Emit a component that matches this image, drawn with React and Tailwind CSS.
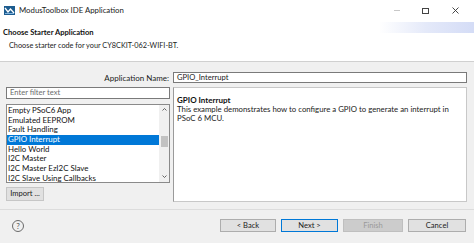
import React from "react";

const items = [
  "Empty PSoC6 App",
  "Emulated EEPROM",
  "Fault Handling",
  "GPIO Interrupt",
  "Hello World",
  "I2C Master",
  "I2C Master EzI2C Slave",
  "I2C Slave Using Callbacks",
];

export default function App() {
  return (
    <div
      className="w-[474px] h-[243px] bg-[#f0f0f0] flex flex-col overflow-hidden text-[#000] whitespace-nowrap"
      style={{ fontFamily: 'Lato, "Noto Sans", sans-serif' }}
    >
      {/* Title bar */}
      <div className="h-[20px] bg-white flex items-center relative shrink-0 pt-[1px]">
        <svg className="ml-[4px] w-[11px] h-[9px]" viewBox="0 0 11 9">
          <rect width="11" height="9" fill="#1d5c8f" />
          <path d="M1 2 L4 6 L6.5 3 L10 7" stroke="#ffffff" strokeWidth="1.3" fill="none" />
          <path d="M1 7.5 L10 7.5" stroke="#7fb3de" strokeWidth="1" />
        </svg>
        <span className="ml-[4px] text-[7.8px] leading-none text-[#222]">ModusToolbox IDE Application</span>
        <div className="ml-auto flex items-center h-full">
          <div className="w-[29px] flex justify-center">
            <div className="w-[6px] h-px bg-[#c8c8c8]" />
          </div>
          <div className="w-[29px] flex justify-center">
            <div className="w-[7px] h-[6px] border border-[#444]" />
          </div>
          <div className="w-[30px] flex justify-center mr-[4px]">
            <svg width="7" height="7" viewBox="0 0 7 7">
              <path d="M0.5 0.5 L6.5 6.5 M6.5 0.5 L0.5 6.5" stroke="#333" strokeWidth="0.9" />
            </svg>
          </div>
        </div>
      </div>

      {/* Header */}
      <div className="h-[42px] bg-white relative shrink-0 border-b border-[#d0d0d0]">
        <div
          className="absolute right-0 top-[2px] h-[11px] w-[95px]"
          style={{
            background:
              "linear-gradient(90deg, rgba(255,255,255,1) 0%, rgba(228,233,249,1) 50%, rgba(212,220,246,1) 100%)",
          }}
        />
        <div className="absolute left-[3px] top-[9px] text-[7.6px] font-bold leading-none text-[#111]">
          Choose Starter Application
        </div>
        <div className="absolute left-[9px] top-[22px] text-[7.3px] leading-none text-[#222]">
          Choose starter code for your CY8CKIT-062-WIFI-BT.
        </div>
      </div>

      {/* Body */}
      <div className="flex-1 flex flex-col pt-[10px] pl-[6px] pr-[7px] pb-[7px] border-b border-[#dcdcdc]">
        <div className="flex items-center h-[11px]">
          <div className="w-[164px] text-right text-[8px] leading-none pr-[1px] text-[#222]">Application Name:</div>
          <div className="ml-[3px] flex-1 h-[11px] bg-white border border-[#7a7a7a] flex items-center pl-[3px] text-[7.6px] leading-none text-[#222]">
            GPIO_Interrupt
          </div>
        </div>
        <div className="flex mt-[4px] flex-1">
          <div className="w-[164px] flex flex-col">
            <div className="h-[12px] bg-white border border-[#7a7a7a] flex items-center pl-[3px] text-[7.6px] leading-none text-[#6d6d6d]">
              Enter filter text
            </div>
            <div className="mt-[5px] h-[79px] bg-white border border-[#8a8a8a] flex overflow-hidden">
              <div className="flex-1 flex flex-col pt-[1px]">
                {items.map((t, i) => (
                  <div
                    key={t}
                    className={
                      i === 3
                        ? "h-[9.7px] shrink-0 flex items-center pl-[1px] text-[7.9px] leading-none bg-[#0078d7] text-white"
                        : "h-[9.7px] shrink-0 flex items-center pl-[1px] text-[7.9px] leading-none text-[#111]"
                    }
                  >
                    {t}
                  </div>
                ))}
              </div>
              <div className="w-[10px] flex flex-col items-center bg-[#f0f0f0]">
                <svg className="mt-[3px]" width="5" height="3" viewBox="0 0 5 3">
                  <path d="M0.5 2.5 L2.5 0.5 L4.5 2.5" stroke="#555" fill="none" strokeWidth="0.9" />
                </svg>
                <div className="mt-[25px] w-[7px] h-[11px] bg-[#c2c2c2]" />
                <svg className="mt-auto mb-[4px]" width="5" height="3" viewBox="0 0 5 3">
                  <path d="M0.5 0.5 L2.5 2.5 L4.5 0.5" stroke="#555" fill="none" strokeWidth="0.9" />
                </svg>
              </div>
            </div>
            <div className="mt-[4px] w-[38px] h-[14px] bg-[#e1e1e1] border border-[#c6c6c6] flex items-center justify-center text-[7.6px] leading-none text-[#222]">
              Import ...
            </div>
          </div>
          <div className="ml-[3px] flex-1 bg-white border border-[#c8c8c8] border-l-[#9a9a9a] px-[3px] pt-[8px] whitespace-normal">
            <div className="text-[8px] font-bold leading-[9px] text-[#111]">GPIO Interrupt</div>
            <div className="text-[7.8px] leading-[9px] text-[#222]">
              This example demonstrates how to configure a GPIO to generate an interrupt in
              <br />
              PSoC 6 MCU.
            </div>
          </div>
        </div>
      </div>

      {/* Footer */}
      <div className="h-[33px] shrink-0 flex items-center pl-[12px] pr-[8px] pb-[2px]">
        <div className="w-[12px] h-[12px] rounded-full border border-[#6a6a6a] flex items-center justify-center text-[8px] leading-none text-[#555]">
          ?
        </div>
        <div className="ml-auto flex gap-[5px]">
          <div className="w-[56px] h-[13px] bg-[#e1e1e1] border border-[#adadad] flex items-center justify-center text-[7.6px] leading-none text-[#222]">
            &lt; Back
          </div>
          <div className="w-[57px] h-[13px] bg-[#e1e1e1] border border-[#0078d7] flex items-center justify-center text-[7.6px] leading-none text-[#222]">
            Next &gt;
          </div>
          <div className="w-[60px] h-[13px] bg-[#cccccc] border border-[#bfbfbf] flex items-center justify-center text-[7.6px] leading-none text-[#9a9a9a]">
            Finish
          </div>
          <div className="w-[58px] h-[13px] bg-[#e1e1e1] border border-[#adadad] flex items-center justify-center text-[7.6px] leading-none text-[#222]">
            Cancel
          </div>
        </div>
      </div>
    </div>
  );
}
